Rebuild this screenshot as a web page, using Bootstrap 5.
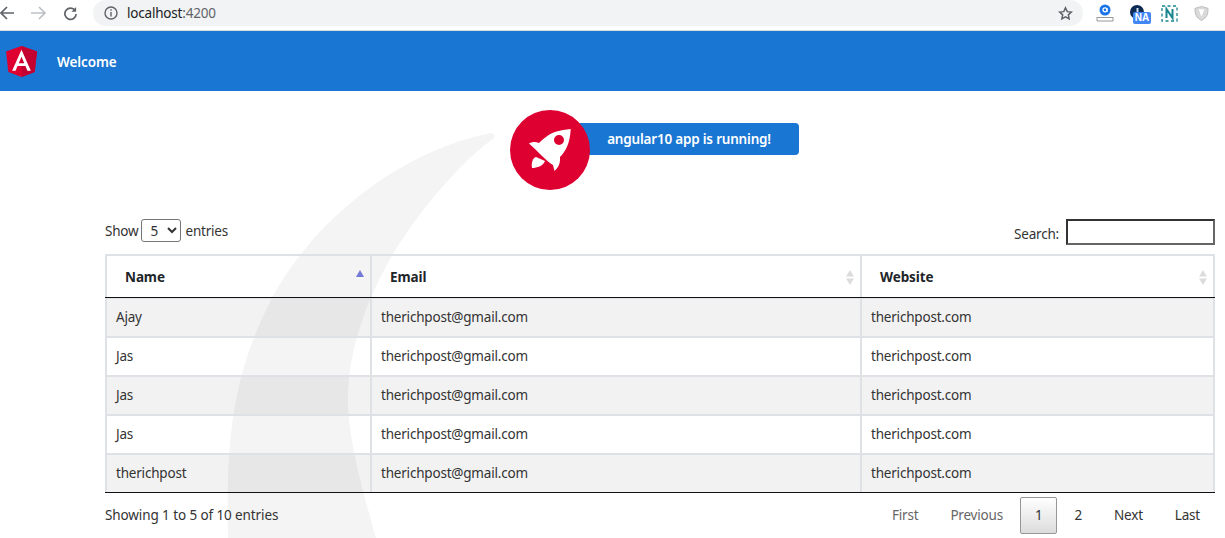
<!DOCTYPE html>
<html lang="en">
<head>
<meta charset="utf-8">
<title>angular10</title>
<link href="https://cdn.jsdelivr.net/npm/bootstrap@5.3.0/dist/css/bootstrap.min.css" rel="stylesheet">
<style>
html,body{height:538px;overflow:hidden}
body{font-family:"Noto Sans","Open Sans",sans-serif;font-size:13.5px;letter-spacing:-.1px;color:#333;background:#fff;position:relative}
.chrome-bar{height:31px;padding-bottom:4px;border-bottom:1px solid #dadce0;background:#fff}
.nav-glyphs{width:93px;gap:17px}
.omni{width:990px;height:26px;background:#f1f3f4;border-radius:13px;padding:0 10px 0 11px;font-size:13.5px;color:#5f6368;letter-spacing:-.2px}
.omni b{font-weight:400;color:#202124}
.omni-url{margin-left:9px}
.ext-row{width:142px;padding-left:6px}
.ext{width:32px;display:flex;justify-content:center;position:relative}
.na-tag{position:absolute;left:12px;top:7px;width:18px;height:12px;border-radius:2px;background:#4285f4;color:#fff;font:700 10px "Liberation Sans",sans-serif;letter-spacing:0;text-align:center;line-height:12px}
.top-band{height:60px;background:#1976d2;padding-left:6px}
.top-band span{margin-left:20px;padding-top:2px;color:#fff;font-weight:600;font-size:13.5px}
.swoosh{position:absolute;left:0;top:0;z-index:-1}
.hero{height:128px;padding-top:19px;padding-left:83px}
.hero-disc{width:80px;height:80px;border-radius:50%;background:#dd0031;position:relative;z-index:1;flex:none}
.hero-pill{width:240px;height:32px;margin-top:13px;margin-left:-31px;padding-left:31px;padding-right:10px;background:#1976d2;border-radius:0 4px 4px 0;color:#fff;font-weight:600;font-size:13.5px;letter-spacing:-.2px}
.dt-zone{margin:0 10px 0 105px}
.dt-top{height:35px;color:#333;letter-spacing:-.2px}
.dt-top label{padding-top:2px}
.dt-top select{width:40px;height:23px;font-size:13.5px;margin:-2px 4px 0 3px;padding:0 0 0 4px;border:1px solid #767676;border-radius:3px;background:#fff;color:#333}
.find-box{width:149px;height:26px;margin:-2px 0 0 7px;border:2px solid #666;border-top-color:#333;border-left-color:#333;background:transparent}
.find-text{padding-top:2px}
table.dt-grid{width:100%;table-layout:fixed;border-collapse:collapse;--bs-table-bg:transparent;margin:0;color:#333;background:transparent}
.dt-grid th{height:43px;padding:2px 0 0 18px;vertical-align:middle;font-weight:700;font-size:13.5px;color:#212529;background:transparent;position:relative;border:2px solid #dee2e6;border-bottom:1px solid #111}
.dt-grid th::after{content:"";position:absolute;left:-2px;right:-2px;bottom:-1px;height:1px;background:#111}
.dt-grid td{height:39px;padding:0 0 0 9px;vertical-align:middle;border:2px solid #dee2e6;font-weight:400;background:transparent;letter-spacing:-.2px}
.dt-grid tbody tr:nth-child(odd) td{background:rgba(0,0,0,.05)}
.dt-grid tbody tr:last-child td{height:38px;border-bottom:0}
.sort{position:absolute;right:6px;top:14px;width:8px;height:15px}
.dt-foot{color:#333;position:relative;border-top:1px solid #111}
.dt-info{padding-top:12px}
.pager{padding-top:4px}
.pg{display:inline-flex;align-items:center;justify-content:center;height:37px;padding:0 14px;margin-left:2px;color:#333;letter-spacing:-.2px;text-decoration:none;border:1px solid transparent;border-radius:2px}
.pg.off{color:#666}
.pg.on{border-color:#979797;background:linear-gradient(#fff,#dcdcdc)}
</style>
</head>
<body>
<svg class="swoosh" width="1225" height="538" viewBox="0 0 1225 538"><path d="M490 133C495 133 496 136 493 139C470 155 437 190 410 228C380 270 348 335 348 400C348 440 364 495 376 538L228 538C226 440 232 375 272 298C305 235 385 155 490 133Z" fill="#f4f4f4"/></svg>

<div class="chrome-bar d-flex align-items-center">
  <div class="nav-glyphs d-flex align-items-center">
    <svg width="14" height="14" viewBox="0 0 14 14" fill="none" stroke="#5f6368" stroke-width="1.7"><path d="M14 7H1M7 1 1 7l6 6"/></svg>
    <svg width="15" height="14" viewBox="0 0 15 14" fill="none" stroke="#bdc1c6" stroke-width="1.7"><path d="M0 7h13M8 1l6 6-6 6"/></svg>
    <svg width="15" height="15" viewBox="0 0 16 16" fill="none" stroke="#5f6368" stroke-width="1.8"><path d="M13 5A6 6 0 1 0 14 8.500"/><path d="M14 1v5H9" fill="#5f6368" stroke="none"/></svg>
  </div>
  <div class="omni d-flex align-items-center">
    <svg width="14" height="14" viewBox="0 0 14 14"><circle cx="7" cy="7" r="6" fill="none" stroke="#5f6368" stroke-width="1.400"/><path d="M6.300 6h1.400v4.500H6.300zM6.300 3.300h1.400v1.500H6.300z" fill="#5f6368"/></svg>
    <span class="omni-url"><b>localhost</b>:4200</span>
    <svg class="ms-auto" width="15" height="15" viewBox="0 0 24 24" fill="none" stroke="#5f6368" stroke-width="2.400"><path d="M12 3l2.800 6 6.500.8-4.800 4.400 1.300 6.400L12 17.400l-5.800 3.200 1.300-6.400-4.800-4.400 6.500-.8z"/></svg>
  </div>
  <div class="ext-row d-flex align-items-center">
    <div class="ext"><svg width="18" height="18" viewBox="0 0 18 18"><circle cx="9" cy="6" r="5.500" fill="#1a73e8"/><circle cx="9" cy="5.800" r="2" fill="none" stroke="#fff" stroke-width="1.300"/><path d="M11 4v4" stroke="#fff" stroke-width="1.200"/><path d="M1 13.500h16M1 17h16M1 13v4M17 13v4" stroke="#999" fill="none"/></svg></div>
    <div class="ext"><svg width="16" height="16" viewBox="0 0 16 16"><circle cx="8" cy="7" r="7" fill="#0d2a52"/><path d="M7.500 3h2v8h-2z" fill="#cfe0f5"/></svg><span class="na-tag">NA</span></div>
    <div class="ext"><svg width="17" height="17" viewBox="0 0 17 17" fill="none"><rect x="1" y="1" width="15" height="15" stroke="#17868f" stroke-width="1.300" stroke-dasharray="3 2.500"/><path d="M5.500 13V4l6 9V4" stroke="#17868f" stroke-width="2"/></svg></div>
    <div class="ext"><svg width="15" height="17" viewBox="0 0 16 17"><path d="M8 1 15 3c0 6-1 10-7 13C2 13 1 9 1 3z" fill="#d9d9d9" stroke="#bbb"/><path d="M5 4h6L8 12z" fill="#fff"/></svg></div>
  </div>
</div>

<header class="top-band d-flex align-items-center">
  <svg width="31" height="33" viewBox="0 0 250 250"><path fill="#dd0031" d="M125 0 0 44.600l19 165.500L125 250l106-39.900L250 44.600z"/><path fill="#c3002f" d="M125 0v250l106-39.900L250 44.600z"/><path fill="#fff" d="M125 31.100 49.200 199.300h28.300l15.200-37.800h64.200l15.300 37.800h28.200zM147.100 138.500h-44.200L125 85.700z"/></svg>
  <span>Welcome</span>
</header>

<div class="hero d-flex justify-content-center align-items-start">
  <div class="hero-disc">
    <svg class="d-block" width="80" height="80" viewBox="0 0 80 80"><path fill="#fff" fill-rule="evenodd" d="M60.700 19C50 20 42 22 36 27C33 29 31 31 29 33C25 31.500 22 32 19 33.500L25 39C30 44 38 52 43 55L44.500 61C48 58 50.500 54 50 47C56 41 60 33 60.700 19ZM49 25a5 5 0 1 1 0 10a5 5 0 0 1 0-10Z"/><path fill="#fff" d="M22 58C21 52 23 48 26 47L35 51C33 56 27 58 22 58Z"/></svg>
  </div>
  <div class="hero-pill d-flex align-items-center justify-content-center"><span>angular10 app is running!</span></div>
</div>

<main class="dt-zone">
  <div class="dt-top d-flex justify-content-between align-items-start">
    <label class="d-flex align-items-center">Show <select aria-label="entries"><option>5</option><option>10</option></select> entries</label>
    <label class="d-flex align-items-center"><span class="find-text">Search:</span><input class="find-box" type="search" aria-label="Search"></label>
  </div>
  <table class="table dt-grid">
    <colgroup><col style="width:265px"><col style="width:490px"><col></colgroup>
    <thead><tr>
      <th>Name<svg class="sort" viewBox="0 0 8 15"><path d="M4 0 8 7H0z" fill="#7479d6"/></svg></th>
      <th>Email<svg class="sort" viewBox="0 0 8 15"><path d="M4 0 8 6.500H0zM4 15 0 8.500h8z" fill="#dcdcdc"/></svg></th>
      <th>Website<svg class="sort" viewBox="0 0 8 15"><path d="M4 0 8 6.500H0zM4 15 0 8.500h8z" fill="#dcdcdc"/></svg></th>
    </tr></thead>
    <tbody>
      <tr><td>Ajay</td><td>therichpost@gmail.com</td><td>therichpost.com</td></tr>
      <tr><td>Jas</td><td>therichpost@gmail.com</td><td>therichpost.com</td></tr>
      <tr><td>Jas</td><td>therichpost@gmail.com</td><td>therichpost.com</td></tr>
      <tr><td>Jas</td><td>therichpost@gmail.com</td><td>therichpost.com</td></tr>
      <tr><td>therichpost</td><td>therichpost@gmail.com</td><td>therichpost.com</td></tr>
    </tbody>
  </table>
  <div class="dt-foot d-flex justify-content-between">
    <div class="dt-info">Showing 1 to 5 of 10 entries</div>
    <div class="pager d-flex">
      <a class="pg off">First</a><a class="pg off">Previous</a><a class="pg on">1</a><a class="pg">2</a><a class="pg">Next</a><a class="pg">Last</a>
    </div>
  </div>
</main>
<script src="https://cdn.jsdelivr.net/npm/bootstrap@5.3.0/dist/js/bootstrap.bundle.min.js"></script>
</body>
</html>
